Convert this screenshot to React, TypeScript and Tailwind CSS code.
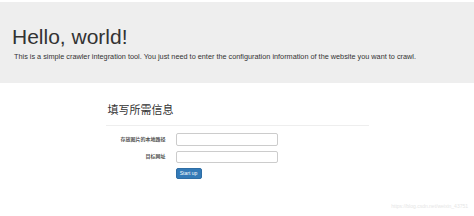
export default function App() {
  return (
    <div
      className="relative h-[216px] w-[474px] overflow-hidden bg-white text-[#333]"
      style={{ fontFamily: '"Liberation Sans", Arial, "Noto Sans CJK SC", sans-serif' }}
    >
      {/* Jumbotron */}
      <div className="mt-[2px] h-[81px] bg-[#eeeeee] px-[12px] pt-[22px]">
        <h1 className="text-[21px] leading-[26px] text-[#333]">Hello, world!</h1>
        <p className="mt-[2px] pl-[2px] text-[7.3px] leading-[10px] text-[#333]">
          This is a simple crawler integration tool. You just need to enter the configuration
          information of the website you want to crawl.
        </p>
      </div>

      {/* Form */}
      <div className="mx-auto mt-[20px] w-[263px]">
        <h3 className="pl-[2px] text-[11px] leading-[14px] text-[#333]">填写所需信息</h3>
        <div className="mt-[8px] border-t border-[#eee]" />
        <div className="mt-[7px] flex flex-col gap-[5px]">
          <div className="flex items-center">
            <label className="w-[60px] text-right text-[5px] font-bold text-[#555]">
              存放图片的本地路径
            </label>
            <input className="ml-[10px] h-[13px] w-[102px] rounded-[2px] border border-[#ccc] bg-white" />
          </div>
          <div className="flex items-center">
            <label className="w-[60px] text-right text-[5px] font-bold text-[#555]">目标网址</label>
            <input className="ml-[10px] h-[12px] w-[102px] rounded-[2px] border border-[#ccc] bg-white" />
          </div>
          <div className="flex pl-[70px]">
            <button className="h-[11px] w-[26px] rounded-[2px] border border-[#2e6da4] bg-[#337ab7] text-[5px] leading-none text-white">
              Start up
            </button>
          </div>
        </div>
      </div>

      {/* watermark */}
      <div className="absolute bottom-[6px] right-[6px] text-[5px] text-[#e6e6e6]">
        https://blog.csdn.net/weixin_43751
      </div>
    </div>
  );
}
